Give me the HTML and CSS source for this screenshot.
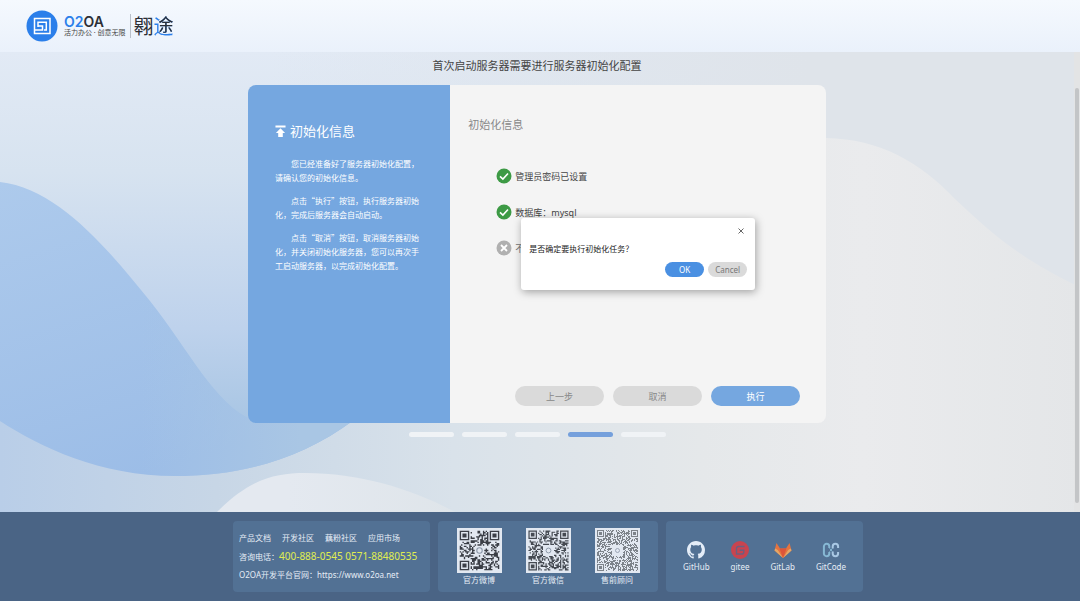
FILE: index.html
```html
<!DOCTYPE html>
<html lang="zh-CN">
  <head>
    <meta charset="UTF-8" />
    <meta name="viewport" content="width=device-width, initial-scale=1.0" />
    <title>O2OA 服务器初始化</title>
    <link rel="stylesheet" href="styles.css">
  </head>
  <body>
    <header class="header">
      <svg class="logo" viewBox="0 0 32 32" aria-hidden="true">
        <circle cx="16" cy="16" r="15.5" fill="#2b7fea" />
        <path d="M8.500 20V8.500H24V23.500H8.500V20H16.500V16H12M12 17V12.300H20.300V20H18" fill="none" stroke="#fff" stroke-width="1.500" />
      </svg>
      <div class="brand">
        <div class="brand-name"><span>O2</span>OA</div>
        <div class="brand-slogan">活力办公 · 创意无限</div>
      </div>
      <div class="product">翱<span>途</span></div>
    </header>

    <main class="main">
      <svg class="waves" viewBox="0 0 1080 460" preserveAspectRatio="none" aria-hidden="true">
        <defs>
          <linearGradient id="ground" x1="0" y1="0" x2="1" y2="0">
            <stop offset="0" stop-color="#b9cee8" />
            <stop offset="0.2" stop-color="#c7d6e6" />
            <stop offset="0.42" stop-color="#d9e2ea" />
            <stop offset="0.65" stop-color="#e5e8ea" />
            <stop offset="0.8" stop-color="#eaebed" />
            <stop offset="1" stop-color="#e4e6e8" />
          </linearGradient>
          <linearGradient id="wave-blue" x1="0" y1="0" x2="0.4" y2="1">
            <stop offset="0" stop-color="#adcaec" />
            <stop offset="1" stop-color="#9cbde7" />
          </linearGradient>
          <linearGradient id="wave-end" x1="0" y1="0" x2="1" y2="0">
            <stop offset="0.4" stop-color="#a9c6e4" stop-opacity="0" />
            <stop offset="0.85" stop-color="#a9c6e4" />
          </linearGradient>
          <linearGradient id="hill" x1="0" y1="0" x2="1" y2="0">
            <stop offset="0.3" stop-color="#e4e9f0" />
            <stop offset="1" stop-color="#dfe5ea" />
          </linearGradient>
        </defs>
        <path d="M0 369L175 420L350 371L740 130C770 90 800 86 826 86C880 87 920 110 955 147C990 180 1020 207 1080 235V460H0Z" fill="url(#ground)" />
        <path d="M0 130C60 137 110 200 150 249C190 300 215 352 252 368H354C300 408 240 424 175 424C100 424 40 395 0 369Z" fill="url(#wave-blue)" />
        <path d="M0 130C60 137 110 200 150 249C190 300 215 352 252 368H354C300 408 240 424 175 424C100 424 40 395 0 369Z" fill="url(#wave-end)" />
        <path d="M217 460C250 427 275 421 305 421C360 421 412 437 455 460Z" fill="url(#hill)" />
      </svg>

      <h1 class="page-title">首次启动服务器需要进行服务器初始化配置</h1>

      <section class="card">
        <aside class="card-side">
          <h2>
            <svg viewBox="0 0 12 14" aria-hidden="true"><path d="M0.500 0.500H11.500V2.500H0.500ZM6 3.500L11 8.500H8.500V13H3.500V8.500H1Z" fill="#fff" /></svg>
            初始化信息
          </h2>
          <p>您已经准备好了服务器初始化配置，请确认您的初始化信息。</p>
          <p>点击“执行”按钮，执行服务器初始化，完成后服务器会自动启动。</p>
          <p>点击“取消”按钮，取消服务器初始化，并关闭初始化服务器，您可以再次手工启动服务器，以完成初始化配置。</p>
        </aside>

        <div class="card-content">
          <h3>初始化信息</h3>
          <ul class="checks">
            <li>
              <svg viewBox="0 0 16 16" aria-hidden="true"><circle cx="8" cy="8" r="7.500" fill="#3d9a45" /><path d="M4 8.300L6.900 11L12 5.500" fill="none" stroke="#fff" stroke-width="1.600" /></svg>
              管理员密码已设置
            </li>
            <li>
              <svg viewBox="0 0 16 16" aria-hidden="true"><circle cx="8" cy="8" r="7.500" fill="#3d9a45" /><path d="M4 8.300L6.900 11L12 5.500" fill="none" stroke="#fff" stroke-width="1.600" /></svg>
              数据库：mysql
            </li>
            <li class="off">
              <svg viewBox="0 0 16 16" aria-hidden="true"><circle cx="8" cy="8" r="7.500" fill="#b0b0b0" /><path d="M5 5L11 11M11 5L5 11" fill="none" stroke="#fff" stroke-width="1.800" /></svg>
              不
            </li>
          </ul>
          <div class="actions">
            <button type="button">上一步</button>
            <button type="button">取消</button>
            <button type="button" class="primary">执行</button>
          </div>

          <dialog class="confirm" open aria-label="确认">
            <button type="button" class="confirm-close" aria-label="关闭">
              <svg viewBox="0 0 8 8" aria-hidden="true"><path d="M1.500 1.500L6.500 6.500M6.500 1.500L1.500 6.500" stroke="#555" stroke-width="0.900" /></svg>
            </button>
            <p>是否确定要执行初始化任务？</p>
            <div class="confirm-buttons">
              <button type="button" class="ok">OK</button>
              <button type="button">Cancel</button>
            </div>
          </dialog>
        </div>
      </section>

      <div class="steps">
        <span></span><span></span><span></span><span class="active"></span><span></span>
      </div>
      <div class="scrollbar"></div>
    </main>

    <footer class="footer">
      <div class="panel contact">
        <nav>
          <a href="#">产品文档</a>
          <a href="#">开发社区</a>
          <a href="#">藕粉社区</a>
          <a href="#">应用市场</a>
        </nav>
        <div>咨询电话：<span class="phone">400-888-0545 0571-88480535</span></div>
        <div>O2OA开发平台官网：<a href="https://www.o2oa.net">https://www.o2oa.net</a></div>
      </div>

      <div class="panel codes">
        <figure>
          <svg class="qr" data-size="29" data-seed="7" data-color="#3a3e46"></svg>
          <figcaption>官方微博</figcaption>
        </figure>
        <figure>
          <svg class="qr" data-size="33" data-seed="23" data-color="#454a52"></svg>
          <figcaption>官方微信</figcaption>
        </figure>
        <figure>
          <svg class="qr" data-size="41" data-seed="91" data-color="#7d838a"></svg>
          <figcaption>售前顾问</figcaption>
        </figure>
      </div>

      <div class="panel repos">
        <a href="#">
          <svg viewBox="0 0 16 16" aria-hidden="true"><path fill="#e4edf8" d="M8 0C3.580 0 0 3.580 0 8c0 3.540 2.290 6.530 5.470 7.590.4.070.55-.17.55-.38 0-.19-.01-.82-.01-1.490-2.010.37-2.530-.49-2.690-.94-.09-.23-.48-.94-.82-1.130-.28-.15-.68-.52-.01-.53.63-.01 1.080.58 1.230.82.72 1.210 1.870.87 2.330.66.07-.52.28-.87.51-1.070-1.780-.2-3.640-.89-3.640-3.950 0-.87.31-1.590.82-2.150-.08-.2-.36-1.020.08-2.120 0 0 .67-.21 2.200.82.64-.18 1.320-.27 2-.27s1.360.09 2 .27c1.530-1.040 2.200-.82 2.200-.82.44 1.100.16 1.920.08 2.120.51.56.82 1.270.82 2.150 0 3.070-1.870 3.750-3.650 3.950.29.25.54.73.54 1.480 0 1.070-.01 1.930-.01 2.200 0 .21.15.46.55.38A8.010 8.010 0 0 0 16 8c0-4.420-3.580-8-8-8z" /></svg>
          GitHub
        </a>
        <a href="#">
          <svg viewBox="0 0 18 18" aria-hidden="true"><circle cx="9" cy="9" r="9" fill="#c8444f" /><path d="M13.500 5.500H7.500Q5.500 5.500 5.500 7.500V13H11Q12.800 13 12.800 11V9.300H8.500" fill="none" stroke="#6b5f80" stroke-width="1.400" /></svg>
          gitee
        </a>
        <a href="#">
          <svg viewBox="0 0 18 18" aria-hidden="true"><path d="M2.500 2L0.500 9.500L9 17L17.500 9.500L15.500 2L12 7.500H6Z" fill="#e5733f" /><path d="M5.500 7.500H12.500L9 17Z" fill="#dd5539" /><path d="M1.200 7.500L0.500 9.500L9 17L3.800 9ZM16.800 7.500L17.500 9.500L9 17L14.200 9Z" fill="#e3a868" /></svg>
          GitLab
        </a>
        <a href="#">
          <svg viewBox="0 0 18 18" aria-hidden="true"><path d="M7.300 7V5.500A2.700 2.700 0 0 0 1.900 5.500V12.500A2.700 2.700 0 0 0 7.300 12.500V11" fill="none" stroke="#86b8d4" stroke-width="2" /><path d="M16.100 7V5.500A2.700 2.700 0 0 0 10.700 5.500V7.500M10.700 10.500V12.500A2.700 2.700 0 0 0 16.100 12.500V11" fill="none" stroke="#a9c8e4" stroke-width="2" /><path d="M7.500 7.300L10.500 10.700M10.500 7.300L7.500 10.700" stroke="#86b8d4" stroke-width="1" /></svg>
          GitCode
        </a>
      </div>
    </footer>

    <script src="script.js"></script>
  </body>
</html>
```

FILE: styles.css
```css
* {
  box-sizing: border-box;
}
body {
  margin: 0;
  min-height: 100vh;
  display: flex;
  flex-direction: column;
  font-family: "Noto Sans", "Noto Sans CJK SC", sans-serif;
  font-size: 8px;
  color: #444;
}
h1, h2, h3, p, ul, figure {
  margin: 0;
  padding: 0;
  font-weight: normal;
}
a {
  color: inherit;
  text-decoration: none;
}
button {
  border: none;
  padding: 0;
  font-family: inherit;
  cursor: pointer;
}

.header {
  display: flex;
  align-items: center;
  height: 52px;
  padding: 0 26px;
  background: linear-gradient(#f5f9fe, #eaf1fb);
}
.logo {
  width: 32px;
  height: 32px;
  margin-right: 6px;
}
.brand {
  padding: 2px 4px 0 0;
  border-right: 1px solid #b9c0ca;
}
.brand-name {
  font-family: Inter, sans-serif;
  font-size: 14px;
  font-weight: 600;
  line-height: 12px;
  color: #2c2f36;
}
.brand-name span {
  color: #2b7fea;
}
.brand-slogan {
  font-size: 7px;
  line-height: 10px;
  color: #444;
}
.product {
  margin-left: 3px;
  font-family: "Noto Sans CJK SC", sans-serif;
  font-size: 20px;
  line-height: 24px;
  color: #2c2f36;
}
/* the walking radical of the second character is blue */
.product span {
  color: transparent;
  background: linear-gradient(#2c2f36, #2c2f36) 100% 0 / 72% 75% no-repeat, #2b7fea;
  -webkit-background-clip: text;
  background-clip: text;
}

.main {
  position: relative;
  flex: 1;
  display: flex;
  flex-direction: column;
  align-items: center;
  padding: 6px 6px 0 0;
  background:
    linear-gradient(90deg, rgba(222, 228, 235, 0) 25%, #dfe4ea 75%),
    linear-gradient(#e2eaf5, #d7e3f0 26%, #bed2ec 60%, #a9c6e4 80%);
}
.waves {
  position: absolute;
  inset: 0;
  width: 100%;
  height: 100%;
}
.page-title {
  position: relative;
  font-size: 11px;
  line-height: 16px;
}
.card {
  position: relative;
  display: flex;
  width: 578px;
  max-width: 100%;
  min-height: 338px;
  margin-top: 11px;
}
.card-side {
  width: 35%;
  padding: 38px 30px 20px 27px;
  border-radius: 8px 0 0 8px;
  background-color: #75a7e0;
  color: #fff;
  font-family: "Noto Sans CJK SC", sans-serif;
}
.card-side h2 {
  display: flex;
  align-items: center;
  gap: 4px;
  margin-bottom: 18px;
  font-size: 13px;
  line-height: 16px;
}
.card-side h2 svg {
  width: 11px;
  height: 13px;
}
.card-side p {
  margin-bottom: 9px;
  line-height: 14px;
  text-indent: 2em;
}
.card-content {
  position: relative;
  flex: 1;
  display: flex;
  flex-direction: column;
  padding: 32px 26px 17px 18px;
  border-radius: 0 8px 8px 0;
  background-color: #f4f4f4;
}
.card-content h3 {
  font-size: 11px;
  line-height: 16px;
  color: #888;
}
.checks {
  display: flex;
  flex-direction: column;
  gap: 20px;
  margin: 35px 0 0 28px;
  list-style: none;
  font-size: 9px;
}
.checks li {
  display: flex;
  align-items: center;
  gap: 3px;
  height: 16px;
}
.checks .off {
  color: #777;
}
.checks svg {
  width: 16px;
  height: 16px;
}
.actions {
  display: flex;
  justify-content: flex-end;
  gap: 9px;
  margin-top: auto;
}
.actions button {
  width: 89px;
  height: 20px;
  border-radius: 10px;
  background-color: #dadada;
  color: #888;
  font-size: 9px;
}
.actions .primary {
  background-color: #75a7e0;
  color: #fff;
}

.confirm {
  position: absolute;
  inset: 133px 0 auto;
  width: 234px;
  margin: 0 auto;
  padding: 9px 8px 13px;
  border: none;
  border-radius: 3px;
  background-color: #fff;
  box-shadow: 1px 2px 8px rgba(0, 0, 0, 0.35);
  color: #222;
  display: flex;
  flex-direction: column;
}
.confirm-close {
  align-self: flex-end;
  width: 8px;
  height: 8px;
  margin-right: 2px;
  background: none;
}
.confirm-close svg {
  display: block;
}
.confirm p {
  margin: 7px 0;
  line-height: 13px;
}
.confirm-buttons {
  display: flex;
  justify-content: flex-end;
  gap: 4px;
}
.confirm-buttons button {
  width: 39px;
  height: 15px;
  border-radius: 8px;
  background-color: #dadada;
  color: #777;
  font-size: 8px;
}
.confirm-buttons .ok {
  background-color: #4a90e2;
  color: #fff;
}

.steps {
  position: relative;
  display: flex;
  gap: 8px;
  margin: 9px 0;
}
.steps span {
  width: 45px;
  height: 5px;
  border-radius: 3px;
  background-color: #f0f3f6;
}
.steps .active {
  background-color: #75a0dc;
}
.scrollbar {
  position: absolute;
  inset: 0 0 0 auto;
  width: 6px;
  padding: 36px 1px 9px;
  background-color: #e3e4e5;
}
.scrollbar::before {
  content: "";
  display: block;
  height: 100%;
  border-radius: 2px;
  background-color: #c3c5c7;
}

.footer {
  display: flex;
  justify-content: center;
  gap: 8px;
  padding: 9px 0 9px 16px;
  background-color: #4a6485;
  color: #e6edf6;
}
.panel {
  display: flex;
  height: 71px;
  border-radius: 4px;
  background-color: #527194;
}
.contact {
  flex-direction: column;
  justify-content: center;
  gap: 4px;
  width: 197px;
  padding: 0 6px;
  line-height: 14px;
}
.contact nav {
  display: flex;
  gap: 11px;
}
.phone {
  color: #e0ee50;
  font-size: 10px;
}
.codes {
  justify-content: center;
  gap: 24px;
  width: 220px;
  padding-top: 7px;
  text-align: center;
}
.codes figcaption {
  line-height: 14px;
}
.qr {
  display: block;
  width: 45px;
  height: 45px;
  background-color: #e2e8f1;
}
.repos {
  justify-content: center;
  align-items: center;
  gap: 21px;
  width: 197px;
  padding-top: 2px;
}
.repos a {
  display: flex;
  flex-direction: column;
  align-items: center;
  gap: 1px;
  line-height: 14px;
}
.repos svg {
  width: 18px;
  height: 18px;
}
```

FILE: script.js
```js
function drawCode(svg) {
  const size = Number(svg.dataset.size);
  let seed = Number(svg.dataset.seed);
  const middle = (size - 1) / 2;
  let d = "";

  function random() {
    seed = (seed * 16807) % 2147483647;
    return seed / 2147483647;
  }

  // dark or light for the three corner squares, null elsewhere
  function finder(x, y) {
    const corners = [[0, 0], [size - 7, 0], [0, size - 7]];
    for (const [cx, cy] of corners) {
      const dist = Math.max(Math.abs(x - cx - 3), Math.abs(y - cy - 3));
      if (dist <= 4) {
        return dist !== 2 && dist !== 4;
      }
    }
    return null;
  }

  for (let y = 0; y < size; y++) {
    for (let x = 0; x < size; x++) {
      const corner = finder(x, y);
      const logo = Math.max(Math.abs(x - middle), Math.abs(y - middle)) < size / 8;
      const noise = random() < 0.5;
      if (corner === null ? noise && !logo : corner) {
        d += `M${x} ${y}h1v1h-1z`;
      }
    }
  }

  svg.setAttribute("viewBox", `-2 -2 ${size + 4} ${size + 4}`);
  svg.innerHTML =
    `<path d="${d}" fill="${svg.dataset.color}"/>` +
    `<circle cx="${size / 2}" cy="${size / 2}" r="2" fill="none" stroke="#8b97a8" stroke-width="0.8"/>`;
}

document.querySelectorAll(".qr").forEach(drawCode);
```
